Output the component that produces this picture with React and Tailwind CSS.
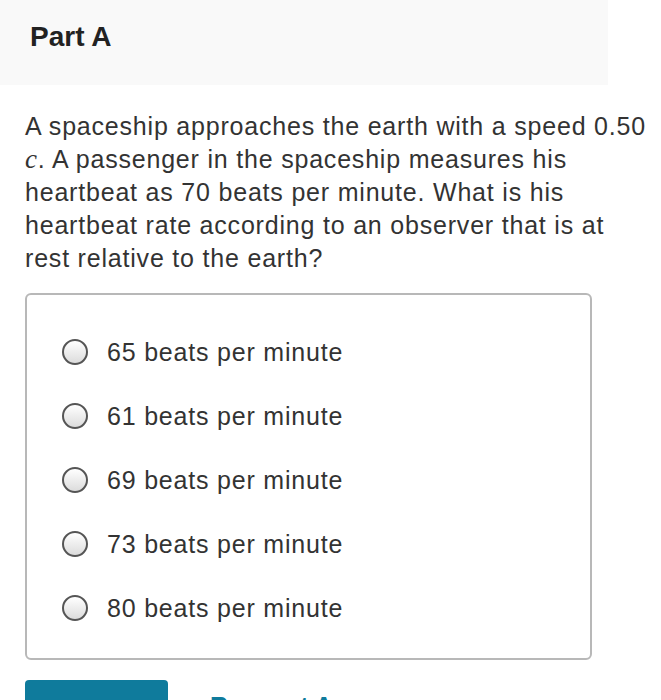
import React from "react";

const options = [
  "65 beats per minute",
  "61 beats per minute",
  "69 beats per minute",
  "73 beats per minute",
  "80 beats per minute",
];

const App = () => {
  return (
    <div className="h-[700px] w-[661px] overflow-hidden bg-white font-['Liberation_Sans',Arial,sans-serif] text-[#333333]">
      {/* Header */}
      <div className="h-[85px] w-[608px] bg-[#f9f9f9] pl-[30px] pt-[21px]">
        <h1 className="text-[28px] font-bold leading-[32px] text-[#222222]">Part A</h1>
      </div>

      {/* Question */}
      <p className="mt-[25px] whitespace-nowrap pl-[25px] text-[25px] leading-[33px] tracking-[0.8px]">
        A spaceship approaches the earth with a speed 0.50
        <br />
        <span className="font-['Liberation_Serif',serif] text-[27px] italic">c</span>. A passenger in the spaceship measures his
        <br />
        heartbeat as 70 beats per minute. What is his
        <br />
        heartbeat rate according to an observer that is at
        <br />
        rest relative to the earth?
      </p>

      {/* Options */}
      <div className="ml-[25px] mt-[18px] flex h-[367px] w-[567px] flex-col gap-[38px] rounded-[6px] border-2 border-[#b8b8b8] pl-[35px] pt-[44px]">
        {options.map((o) => (
          <label key={o} className="flex h-[26px] items-center gap-[19px]">
            <span className="h-[26px] w-[26px] shrink-0 rounded-full border-2 border-[#555555] bg-gradient-to-b from-[#ffffff] to-[#dcdcdc]" />
            <span className="whitespace-nowrap text-[25px] leading-[26px] tracking-[0.8px]">{o}</span>
          </label>
        ))}
      </div>

      {/* Actions */}
      <div className="ml-[25px] mt-[20px] flex items-start gap-[42px]">
        <button className="h-[48px] w-[143px] rounded-[4px] bg-[#0f7b9c] pt-[12px] text-[25px] font-bold leading-[28px] text-white">
          Submit
        </button>
        <span className="whitespace-nowrap pt-[12px] text-[25px] font-bold leading-[28px] text-[#0f7b9c]">
          Request Answer
        </span>
      </div>
    </div>
  );
};

export default App;
